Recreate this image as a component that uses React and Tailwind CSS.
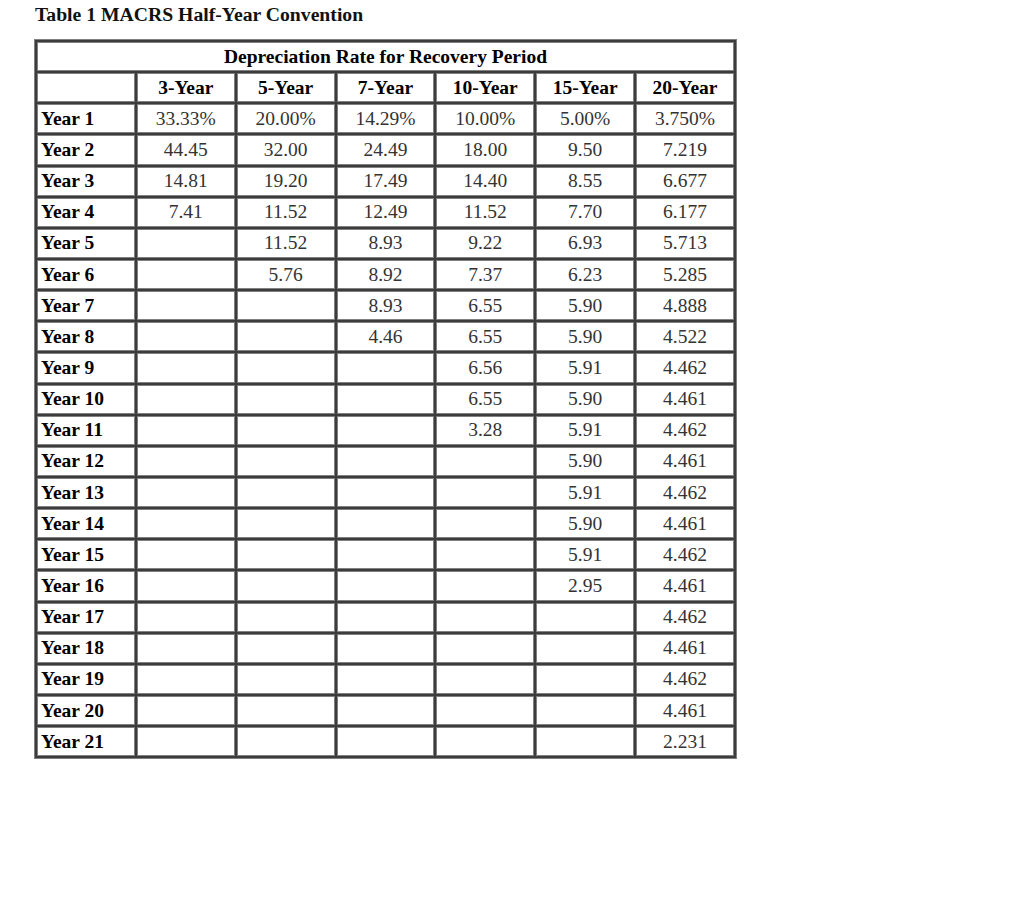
const columns = ['3-Year', '5-Year', '7-Year', '10-Year', '15-Year', '20-Year']

const rows = [
  ['33.33%', '20.00%', '14.29%', '10.00%', '5.00%', '3.750%'],
  ['44.45', '32.00', '24.49', '18.00', '9.50', '7.219'],
  ['14.81', '19.20', '17.49', '14.40', '8.55', '6.677'],
  ['7.41', '11.52', '12.49', '11.52', '7.70', '6.177'],
  ['', '11.52', '8.93', '9.22', '6.93', '5.713'],
  ['', '5.76', '8.92', '7.37', '6.23', '5.285'],
  ['', '', '8.93', '6.55', '5.90', '4.888'],
  ['', '', '4.46', '6.55', '5.90', '4.522'],
  ['', '', '', '6.56', '5.91', '4.462'],
  ['', '', '', '6.55', '5.90', '4.461'],
  ['', '', '', '3.28', '5.91', '4.462'],
  ['', '', '', '', '5.90', '4.461'],
  ['', '', '', '', '5.91', '4.462'],
  ['', '', '', '', '5.90', '4.461'],
  ['', '', '', '', '5.91', '4.462'],
  ['', '', '', '', '2.95', '4.461'],
  ['', '', '', '', '', '4.462'],
  ['', '', '', '', '', '4.461'],
  ['', '', '', '', '', '4.462'],
  ['', '', '', '', '', '4.461'],
  ['', '', '', '', '', '2.231'],
]

const cell = 'h-[29.15px] p-0 border border-[#808080] whitespace-nowrap'

export default function App() {
  return (
    <div className="min-h-[899px] bg-white pl-[34px] pt-[3px] font-['Liberation_Serif',serif] text-black">
      <div className="pl-px text-[19.7px] font-bold leading-[22px] text-[#111]">Table 1 MACRS Half-Year Convention</div>

      <table className="mt-[14px] w-[703px] table-fixed border-separate border-spacing-[2px] border border-[#808080] bg-[#3c3c3c] text-[19.5px] leading-[24px]">
        <thead>
          <tr>
            <th colSpan={7} className={`${cell} bg-white text-center font-bold`}>Depreciation Rate for Recovery Period</th>
          </tr>
          <tr>
            <th className={`${cell} bg-white`}></th>
            {columns.map((c) => (
              <th key={c} className={`${cell} bg-white text-center font-bold`}>{c}</th>
            ))}
          </tr>
        </thead>
        <tbody>
          {rows.map((r, i) => (
            <tr key={i}>
              <td className={`${cell} bg-white pl-[3px] text-left font-bold`}>Year {i + 1}</td>
              {r.map((v, j) => (
                <td key={j} className={`${cell} bg-white text-center text-[#333]`}>{v}</td>
              ))}
            </tr>
          ))}
        </tbody>
      </table>
    </div>
  )
}
